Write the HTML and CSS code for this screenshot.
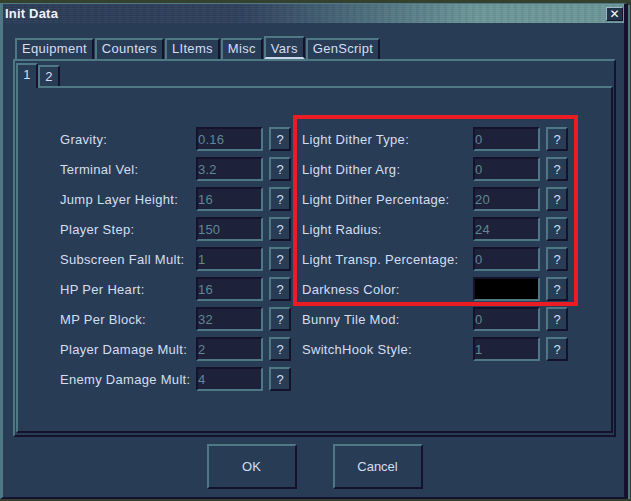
FILE: index.html
```html
<!DOCTYPE html>
<html lang="en">
<head>
    <meta charset="UTF-8">
    <title>Init Data</title>
    <link rel="stylesheet" href="styles.css">
</head>
<body>
    <div class="window">
        <div class="titlebar">
            <span class="title">Init Data</span>
            <button class="close">&#x2715;</button>
        </div>

        <div class="content">
            <div class="tabs">
                <div class="tab">Equipment</div>
                <div class="tab">Counters</div>
                <div class="tab">LItems</div>
                <div class="tab">Misc</div>
                <div class="tab active">Vars</div>
                <div class="tab">GenScript</div>
            </div>

            <div class="panel">
                <div class="subtabs">
                    <div class="subtab active">1</div>
                    <div class="subtab">2</div>
                </div>

                <div class="subpanel">
                    <div class="fields">
                        <div class="col">
                            <div class="row"><span class="label">Gravity:</span><input class="value" value="0.16" readonly><button class="help">?</button></div>
                            <div class="row"><span class="label">Terminal Vel:</span><input class="value" value="3.2" readonly><button class="help">?</button></div>
                            <div class="row"><span class="label">Jump Layer Height:</span><input class="value" value="16" readonly><button class="help">?</button></div>
                            <div class="row"><span class="label">Player Step:</span><input class="value" value="150" readonly><button class="help">?</button></div>
                            <div class="row"><span class="label">Subscreen Fall Mult:</span><input class="value" value="1" readonly><button class="help">?</button></div>
                            <div class="row"><span class="label">HP Per Heart:</span><input class="value" value="16" readonly><button class="help">?</button></div>
                            <div class="row"><span class="label">MP Per Block:</span><input class="value" value="32" readonly><button class="help">?</button></div>
                            <div class="row"><span class="label">Player Damage Mult:</span><input class="value" value="2" readonly><button class="help">?</button></div>
                            <div class="row"><span class="label">Enemy Damage Mult:</span><input class="value" value="4" readonly><button class="help">?</button></div>
                        </div>

                        <div class="col col-right">
                            <div class="row"><span class="label">Light Dither Type:</span><input class="value" value="0" readonly><button class="help">?</button></div>
                            <div class="row"><span class="label">Light Dither Arg:</span><input class="value" value="0" readonly><button class="help">?</button></div>
                            <div class="row"><span class="label">Light Dither Percentage:</span><input class="value" value="20" readonly><button class="help">?</button></div>
                            <div class="row"><span class="label">Light Radius:</span><input class="value" value="24" readonly><button class="help">?</button></div>
                            <div class="row"><span class="label">Light Transp. Percentage:</span><input class="value" value="0" readonly><button class="help">?</button></div>
                            <div class="row"><span class="label">Darkness Color:</span><div class="value swatch"></div><button class="help">?</button></div>
                            <div class="row"><span class="label">Bunny Tile Mod:</span><input class="value" value="0" readonly><button class="help">?</button></div>
                            <div class="row"><span class="label">SwitchHook Style:</span><input class="value" value="1" readonly><button class="help">?</button></div>
                        </div>
                    </div>

                    <!-- annotation box around the lighting settings -->
                    <div class="highlight"></div>
                </div>
            </div>

            <div class="actions">
                <button class="btn">OK</button>
                <button class="btn">Cancel</button>
            </div>
        </div>
    </div>
</body>
</html>
```

FILE: styles.css
```css
* {
    box-sizing: border-box;
    margin: 0;
    padding: 0;
}

body {
    font-family: 'Liberation Sans', Arial, sans-serif;
    font-size: 13px;
    letter-spacing: 0.3px;
    color: #d3dff2;
    background: #34412f;
}

.window {
    width: 628px;
    height: 496px;
    margin-top: 3px;
    background: #293c55;
    border-top: 1px solid #4e7884;
    border-left: 3px solid #4e7884;
    border-right: 4px solid #15122b;
    border-bottom: 2px solid #15122b;
    box-shadow: 2px 2px 0 #4e7884;
}

.titlebar {
    height: 19px;
    display: flex;
    align-items: flex-start;
    justify-content: space-between;
    padding: 0 1px 0 2px;
    background:
        repeating-linear-gradient(0deg, rgba(255, 255, 255, 0.06) 0 1px, transparent 1px 2px),
        repeating-linear-gradient(90deg, rgba(0, 0, 0, 0.05) 0 3px, transparent 3px 7px),
        linear-gradient(90deg, #293a55 0%, #2c3e5a 38%, #4a6b7b 58%, #6a9597 76%, #6b9698 100%);
}

.title {
    font-weight: bold;
    line-height: 19px;
    color: #eef3fb;
    letter-spacing: 0.2px;
}

.close {
    width: 17px;
    height: 14px;
    margin-top: 3px;
    background: #233249;
    border: 1px solid;
    border-color: #9fb6c4 #15122b #15122b #9fb6c4;
    color: #ffffff;
    font-family: 'DejaVu Sans', sans-serif;
    font-size: 12px;
    font-weight: bold;
    line-height: 12px;
}

.content {
    padding: 13px 8px 0 10px;
}

.tabs {
    display: flex;
    align-items: flex-end;
    height: 23px;
    margin-left: 2px;
    gap: 1px;
}

.tab {
    height: 21px;
    padding: 0 5px;
    border: 2px solid;
    border-color: #4e7884 #15122b transparent #4e7884;
    border-bottom: none;
    line-height: 17px;
}

.tab.active {
    height: 23px;
    padding-top: 2px;
    border-bottom: 2px solid #c9d6ea;
}

.panel {
    height: 378px;
    display: flex;
    flex-direction: column;
    padding: 2px 1px;
    border: 2px solid;
    border-color: #4e7884 #15122b #15122b #4e7884;
}

.subtabs {
    display: flex;
    align-items: flex-end;
    height: 23px;
}

.subtab {
    width: 22px;
    height: 21px;
    border: 2px solid;
    border-color: #4e7884 #15122b transparent #4e7884;
    border-bottom: none;
    text-align: center;
    line-height: 19px;
}

.subtab.active {
    height: 25px;
    margin-bottom: -2px;
    background: #293c55;
    position: relative;
    z-index: 1;
}

.subpanel {
    flex: 1;
    position: relative;
    padding: 39px 0 0 42px;
    border: 2px solid;
    border-color: #4e7884 #15122b #15122b #4e7884;
}

.fields {
    display: flex;
    gap: 11px;
}

.col {
    display: flex;
    flex-direction: column;
    gap: 6px;
}

.row {
    display: flex;
    align-items: center;
    height: 24px;
}

.label {
    width: 136px;
}

.col-right .label {
    width: 171px;
}

.value {
    width: 67px;
    height: 24px;
    border: 2px solid;
    border-color: #15122b #4e7884 #4e7884 #15122b;
    background: #1d2139;
    color: #5f8892;
    font: inherit;
    letter-spacing: 0.2px;
    outline: none;
}

.swatch {
    background: #000000;
}

.help {
    width: 22px;
    height: 24px;
    margin-left: 6px;
    border: 2px solid;
    border-color: #4e7884 #15122b #15122b #4e7884;
    background: #293c55;
    color: #d3dff2;
    font: inherit;
}

.highlight {
    position: absolute;
    left: 275px;
    top: 27px;
    width: 285px;
    height: 191px;
    border: 4px solid #ec1c24;
}

.actions {
    display: flex;
    justify-content: center;
    gap: 36px;
    margin-top: 7px;
}

.btn {
    width: 90px;
    height: 45px;
    border: 2px solid;
    border-color: #4e7884 #15122b #15122b #4e7884;
    background: #293c55;
    color: #d3dff2;
    font: inherit;
}
```
